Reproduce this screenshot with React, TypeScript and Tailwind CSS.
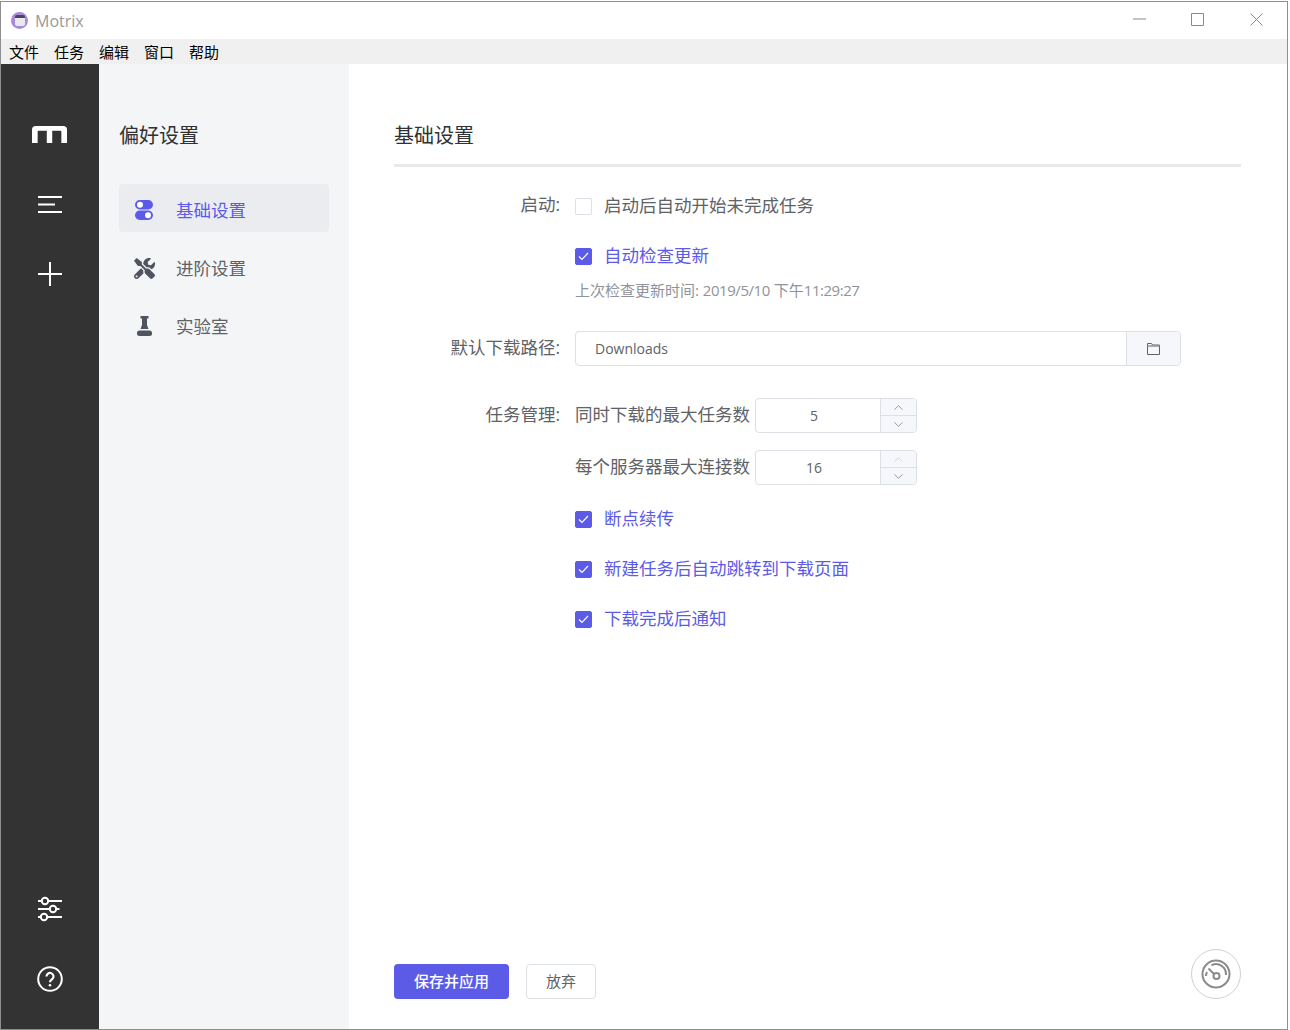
import { ChevronDown, ChevronUp } from "lucide-react";
import { FaTools } from "react-icons/fa";

const CJK = "font-['Open_Sans','Noto_Sans_CJK_SC',sans-serif]";

function LogoM() {
  return (
    <svg width="35" height="17" viewBox="0 0 36 18" fill="#fff" preserveAspectRatio="none" className="mr-[1px]">
      <path d="M0 18V4a4 4 0 0 1 4-4h28a4 4 0 0 1 4 4v14h-5.800V6a1 1 0 0 0-1-1h-8.400v13h-5.600V5H6.800a1 1 0 0 0-1 1v12z" />
    </svg>
  );
}

function MenuIcon() {
  return (
    <svg width="24" height="18" viewBox="0 0 24 18" stroke="#fff" strokeWidth="2">
      <path d="M0 1h24M0 8.500h17M0 16h24" />
    </svg>
  );
}

function PlusIcon() {
  return (
    <svg width="24" height="24" viewBox="0 0 24 24" stroke="#fff" strokeWidth="2">
      <path d="M0 12h24M12 0v24" />
    </svg>
  );
}

function SlidersIcon() {
  return (
    <svg width="26" height="26" viewBox="0 0 26 26" fill="none" stroke="#fff" strokeWidth="2">
      <circle cx="8" cy="5" r="3.200" />
      <circle cx="16" cy="13" r="3.200" />
      <circle cx="7" cy="21" r="3.200" />
      <path d="M1 5h3.500M12 5h13M1 13h11.500M20 13h2.500M1 21h2.500M11 21h14" />
    </svg>
  );
}

function HelpIcon() {
  return (
    <svg width="26" height="26" viewBox="0 0 26 26" fill="none" stroke="#fff" strokeWidth="2">
      <circle cx="13" cy="13" r="11.800" />
      <path d="M9.500 10.500a3.500 3.500 0 1 1 5.600 2.800c-1.300 1-2.100 1.500-2.100 3" strokeWidth="2.200" />
      <circle cx="13" cy="19.300" r="1.300" fill="#fff" stroke="none" />
    </svg>
  );
}

function ToggleIcon() {
  return (
    <svg width="18" height="20" viewBox="0 0 18 20" fill="#5b5be8">
      <rect x="0" y="0" width="18" height="9.500" rx="4.750" />
      <rect x="0" y="10.500" width="18" height="9.500" rx="4.750" />
      <circle cx="5" cy="4.750" r="3" fill="#fff" />
      <circle cx="13" cy="15.250" r="3" fill="#fff" />
    </svg>
  );
}

function LabIcon() {
  return (
    <svg width="15" height="20" viewBox="0 0 15 20" fill="#4f5460">
      <path d="M3.500 0h8v2.500H10v6.500l1.500 4h-8l1.500-4V2.500H3.500z" />
      <rect x="0" y="14.500" width="15" height="5.500" rx="2.500" />
    </svg>
  );
}

function FolderIcon() {
  return (
    <svg width="13" height="12" viewBox="0 0 13 12" fill="none" stroke="#606266" strokeWidth="1">
      <path d="M.5 11.500V.5h4l1 1.500h7v9.500z" />
      <path d="M.5 3h12" stroke="#909399" strokeWidth="1.500" />
    </svg>
  );
}

function GaugeIcon() {
  return (
    <svg width="30" height="30" viewBox="0 0 30 30" fill="none" stroke="#8b8b8b" strokeWidth="2">
      <circle cx="15" cy="15" r="13.500" />
      <circle cx="15.500" cy="17" r="3" />
      <path d="M13 15 7.500 9.500" />
      <path d="M5 17a10 10 0 0 1 1-4M10.500 6.300A10 10 0 0 1 25 16" />
    </svg>
  );
}

function WindowButtons() {
  return (
    <div className="ml-auto flex items-center mr-[24px]">
      <svg width="13" height="13" viewBox="0 0 13 13" stroke="#8a8a8a" fill="none" className="mr-[45px] -mt-[2px]">
        <path d="M0 6h13" />
      </svg>
      <svg width="13" height="13" viewBox="0 0 13 13" stroke="#8a8a8a" fill="none" className="mr-[46px] -mt-[2px]">
        <path d="M.5.500h12v12H.5z" />
      </svg>
      <svg width="13" height="13" viewBox="0 0 13 13" stroke="#8a8a8a" fill="none" className="-mt-[2px]">
        <path d="m.5.500 12 12M12.500.500l-12 12" />
      </svg>
    </div>
  );
}

function Check({ checked, label }: { checked?: boolean; label: string }) {
  return (
    <label className="flex items-center h-[26px]">
      <span
        className={`w-[17px] h-[17px] rounded-[2px] border flex items-center justify-center ${
          checked ? "bg-[#5b5be8] border-[#5b5be8]" : "bg-white border-[#dcdfe6]"
        }`}
      >
        {checked && (
          <svg width="11" height="9" viewBox="0 0 11 9" fill="none" stroke="#fff" strokeWidth="1.200">
            <path d="M1 4.500 4 7.500 10 1" />
          </svg>
        )}
      </span>
      <span className={`ml-[12px] -mt-[1px] text-[17.500px] ${checked ? "text-[#5b5be8]" : "text-[#606266]"}`}>{label}</span>
    </label>
  );
}

function NumberBox({ value, upDisabled }: { value: string; upDisabled?: boolean }) {
  return (
    <div className="w-[162px] h-[35px] border border-[#dcdfe6] rounded-[4px] flex overflow-hidden bg-white">
      <div className="flex-1 flex items-center justify-center pr-[8px] text-[#606266] text-[14px]">{value}</div>
      <div className="w-[36px] flex flex-col border-l border-[#dcdfe6] bg-[#f5f7fa]">
        <div className="flex-1 flex items-center justify-center border-b border-[#dcdfe6]">
          <ChevronUp size={15} strokeWidth={1} className={upDisabled ? "text-[#c0c4cc]" : "text-[#606266]"} />
        </div>
        <div className="flex-1 flex items-center justify-center">
          <ChevronDown size={15} strokeWidth={1} className="text-[#606266]" />
        </div>
      </div>
    </div>
  );
}

function Row({ label, className, children }: { label?: string; className?: string; children: React.ReactNode }) {
  return (
    <div className={`flex ${className ?? ""}`}>
      <div className="w-[166px] h-[26px] shrink-0 text-right text-[17.500px] text-[#606266] leading-[23px]">{label}</div>
      <div className="ml-[15px] flex-1">{children}</div>
    </div>
  );
}

export default function App() {
  return (
    <div className={`${CJK} w-[1290px] h-[1030px] bg-white overflow-hidden`}>
      <div className="mt-px w-[1288px] h-[1029px] border border-[#8f8f8f] flex flex-col">
        {/* title bar */}
        <div className="h-[37px] flex items-center bg-white shrink-0">
          <div className="ml-[10px] w-[17px] h-[17px] rounded-full bg-[#a78bd8] flex items-center justify-center">
            <div className="w-[10px] h-[11px] rounded-[2px] bg-[#e8e8ee] border-t-[3px] border-[#4a4560]" />
          </div>
          <span className="ml-[7px] text-[16px] text-[#999]">Motrix</span>
          <WindowButtons />
        </div>
        {/* menu bar */}
        <div className="h-[25px] bg-[#f0f0f0] flex items-center pl-[8px] pt-[1px] gap-[15px] text-[15px] text-black shrink-0">
          <span>文件</span>
          <span>任务</span>
          <span>编辑</span>
          <span>窗口</span>
          <span>帮助</span>
        </div>
        <div className="flex flex-1 min-h-0">
          {/* icon rail */}
          <div className="w-[98px] bg-[#333] flex flex-col items-center justify-between pt-[62px] pb-[37px] shrink-0">
            <div className="flex flex-col items-center">
              <LogoM />
              <div className="mt-[53px]"><MenuIcon /></div>
              <div className="mt-[48px]"><PlusIcon /></div>
            </div>
            <div className="flex flex-col items-center gap-[44px]">
              <SlidersIcon />
              <HelpIcon />
            </div>
          </div>
          {/* preference nav */}
          <div className="w-[250px] bg-[#f4f5f7] px-[20px] shrink-0">
            <h2 className="mt-[58px] text-[20px] leading-[28px] text-[#303133]">偏好设置</h2>
            <ul className="mt-[34px]">
              <li className="h-[48px] pt-[4px] rounded-[4px] bg-[#ebecef] flex items-center text-[#5b5be8] text-[17.500px]">
                <span className="w-[50px] mr-[7px] flex justify-center"><ToggleIcon /></span>
                基础设置
              </li>
              <li className="mt-[10px] h-[48px] pt-[4px] flex items-center text-[#606266] text-[17.500px]">
                <span className="w-[50px] mr-[7px] flex justify-center"><FaTools size={21} color="#4f5460" /></span>
                进阶设置
              </li>
              <li className="mt-[10px] h-[48px] pt-[4px] flex items-center text-[#606266] text-[17.500px]">
                <span className="w-[50px] mr-[7px] flex justify-center"><LabIcon /></span>
                实验室
              </li>
            </ul>
          </div>
          {/* content */}
          <div className="relative flex-1 pl-[45px] pr-[46px] flex flex-col">
            <h3 className="mt-[58px] pb-[14px] text-[20px] leading-[28px] text-[#303133] border-b-[3px] border-[#e9e9ec]">基础设置</h3>
            <Row label="启动:" className="mt-[26px]">
              <Check label="启动后自动开始未完成任务" />
            </Row>
            <Row className="mt-[24px]">
              <Check checked label="自动检查更新" />
            </Row>
            <Row className="mt-[9px]">
              <div className="text-[15px] leading-[24px] text-[#909399]">
                上次检查更新时间: <span className="tracking-[-0.45px]">2019/5/10</span> 下午<span className="tracking-[-0.45px]">11:29:27</span>
              </div>
            </Row>
            <Row label="默认下载路径:" className="mt-[27px] items-center">
              <div className="w-[606px] h-[35px] border border-[#dcdfe6] rounded-[4px] flex overflow-hidden">
                <div className="flex-1 pl-[19px] pb-[1px] flex items-center text-[14px] text-[#606266]">Downloads</div>
                <div className="w-[54px] bg-[#f5f7fa] border-l border-[#dcdfe6] flex items-center justify-center">
                  <FolderIcon />
                </div>
              </div>
            </Row>
            <Row label="任务管理:" className="mt-[32px] items-center">
              <div className="flex items-center">
                <span className="w-[180px] pb-[2px] text-[17.500px] text-[#606266]">同时下载的最大任务数</span>
                <NumberBox value="5" />
              </div>
            </Row>
            <Row className="mt-[17px] items-center">
              <div className="flex items-center">
                <span className="w-[180px] pb-[2px] text-[17.500px] text-[#606266]">每个服务器最大连接数</span>
                <NumberBox value="16" upDisabled />
              </div>
            </Row>
            <Row className="mt-[21px]">
              <Check checked label="断点续传" />
            </Row>
            <Row className="mt-[24px]">
              <Check checked label="新建任务后自动跳转到下载页面" />
            </Row>
            <Row className="mt-[24px]">
              <Check checked label="下载完成后通知" />
            </Row>
            <div className="mt-auto mb-[30px] flex gap-[17px]">
              <button className="w-[115px] h-[35px] rounded-[4px] bg-[#5b5be8] text-white text-[15px] font-medium">保存并应用</button>
              <button className="w-[70px] h-[35px] rounded-[4px] border border-[#dcdfe6] bg-white text-[#606266] text-[15px]">放弃</button>
            </div>
            <div className="absolute right-[46px] bottom-[30px] w-[50px] h-[50px] rounded-full border border-[#d0d0d0] flex items-center justify-center">
              <GaugeIcon />
            </div>
          </div>
        </div>
      </div>
    </div>
  );
}
